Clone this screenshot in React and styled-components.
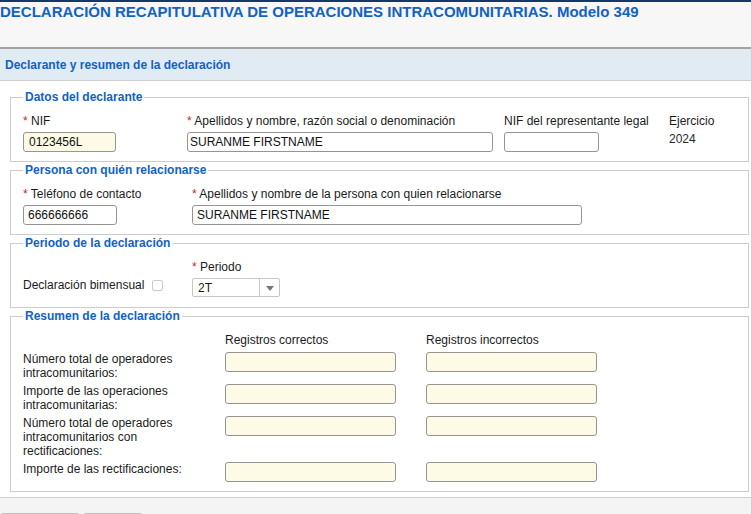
import React from 'react'
import styled, { createGlobalStyle } from 'styled-components'

const GlobalStyle = createGlobalStyle`
  html, body {
    margin: 0;
    padding: 0;
    background: #fff;
    overflow: hidden;
  }
  body {
    font-family: "Liberation Sans", Arial, Helvetica, sans-serif;
    font-size: 12px;
    color: #1b1b1b;
  }
`

const BLUE = '#1162c3'

const Page = styled.div`
  width: 751px;
  height: 514px;
  overflow: hidden;
  border-right: 1px solid #cfcfcf;
`

const TitleBar = styled.header`
  height: 44px;
  padding: 1px 0 0 0;
  background: #f7f7f7;
  border-top: 2px solid #15386a;
  border-bottom: 2px solid #a2a2a2;
`

const Title = styled.h1`
  margin: 0;
  font-size: 15px;
  line-height: 17px;
  font-weight: bold;
  color: ${BLUE};
`

const PanelHeader = styled.div`
  height: 31px;
  display: flex;
  align-items: center;
  padding-left: 5px;
  background: #e0ebf4;
  border-bottom: 1px solid #cfcfcf;
  font-weight: bold;
  font-size: 12px;
  color: ${BLUE};
`

const Body = styled.div`
  padding: 9px 2px 4px 10px;
`

const Group = styled.fieldset`
  margin: 0 0 1px;
  padding: 7px 0 9px 12px;
  border: 1px solid #cdcdcd;
  min-width: 0;
`

const Legend = styled.legend`
  padding: 0 2px;
  font-size: 12px;
  line-height: 14px;
  font-weight: bold;
  color: ${BLUE};
`

const GroupBody = styled.div`
  height: ${p => p.$h}px;
  overflow: hidden;
`

const Row = styled.div`
  display: flex;
  align-items: flex-start;
`

const Field = styled.div`
  width: ${p => p.$w ? `${p.$w}px` : 'auto'};
  flex: ${p => p.$w ? 'none' : '1'};
  display: flex;
  flex-direction: column;
`

const Label = styled.label`
  display: block;
  padding-top: 3px;
  margin-bottom: 4px;
  line-height: 14px;
  font-size: 12px;
  white-space: nowrap;
`

const Req = styled.span`
  color: #d0242a;
`

const Value = styled.span`
  line-height: 14px;
  color: #2a2a2a;
`

const Input = styled.input`
  width: ${p => p.$w}px;
  height: 20px;
  box-sizing: border-box;
  margin: 0;
  padding: 0 ${p => p.$pad ?? 3}px;
  border: 1px solid #959595;
  border-radius: 3px;
  background: ${p => p.$cream ? '#fdfbe6' : '#fff'};
  font-family: inherit;
  font-size: 12px;
  color: #111;
  outline: none;
`

const CheckLine = styled.div`
  width: 169px;
  margin-top: 21px;
  display: flex;
  align-items: center;
  gap: 8px;
`

const Box = styled.span`
  width: 9px;
  height: 9px;
  border: 1px solid #cbcbcb;
  border-radius: 2px;
  background: #fff;
`

const Select = styled.div`
  width: 88px;
  height: 19px;
  box-sizing: border-box;
  display: flex;
  border: 1px solid #c6c6c6;
  border-radius: 2px;
  background: #fff;
`

const SelectValue = styled.span`
  flex: 1;
  padding-left: 5px;
  line-height: 19px;
`

const SelectArrow = styled.span`
  width: 19px;
  border-left: 1px solid #c6c6c6;
  display: flex;
  align-items: center;
  justify-content: center;
  padding-top: 2px;
`

const SummaryGrid = styled.div`
  display: grid;
  grid-template-columns: 202px 201px 171px;
  row-gap: 4px;
  align-items: start;
`

const ColHead = styled.span`
  padding-top: 3px;
  margin-bottom: 1px;
  line-height: 14px;
`

const RowLabel = styled.span`
  width: 178px;
  line-height: 14px;
`

const Footer = styled.div`
  height: 40px;
  padding-top: 15px;
  background: #f4f4f4;
  border-top: 1px solid #cfcfcf;
  display: flex;
  gap: 3px;
`

const Button = styled.button`
  width: ${p => p.$w}px;
  height: 24px;
  border: 1px solid #bdbdbd;
  border-radius: 3px;
  background: #fbfbfb;
`

const summaryRows = [
  'Número total de operadores intracomunitarios:',
  'Importe de las operaciones intracomunitarias:',
  'Número total de operadores intracomunitarios con rectificaciones:',
  'Importe de las rectificaciones:',
]

const ReqLabel = ({ children }) => (
  <Label><Req>*</Req> {children}</Label>
)

export default function App() {
  return (
    <Page>
      <GlobalStyle />
      <TitleBar>
        <Title>DECLARACIÓN RECAPITULATIVA DE OPERACIONES INTRACOMUNITARIAS. Modelo 349</Title>
      </TitleBar>
      <PanelHeader>Declarante y resumen de la declaración</PanelHeader>

      <Body>
        <Group>
          <Legend>Datos del declarante</Legend>
          <GroupBody $h={41}>
            <Row>
              <Field $w={164}>
                <ReqLabel>NIF</ReqLabel>
                <Input $w={93} $pad={5} $cream defaultValue="0123456L" readOnly />
              </Field>
              <Field $w={317}>
                <ReqLabel>Apellidos y nombre, razón social o denominación</ReqLabel>
                <Input $w={306} $pad={2} defaultValue="SURANME FIRSTNAME" readOnly />
              </Field>
              <Field $w={165}>
                <Label>NIF del representante legal</Label>
                <Input $w={95} readOnly />
              </Field>
              <Field>
                <Label>Ejercicio</Label>
                <Value>2024</Value>
              </Field>
            </Row>
          </GroupBody>
        </Group>

        <Group>
          <Legend>Persona con quién relacionarse</Legend>
          <GroupBody $h={41}>
            <Row>
              <Field $w={169}>
                <ReqLabel>Teléfono de contacto</ReqLabel>
                <Input $w={94} $pad={4} defaultValue="666666666" readOnly />
              </Field>
              <Field>
                <ReqLabel>Apellidos y nombre de la persona con quien relacionarse</ReqLabel>
                <Input $w={390} $pad={4} defaultValue="SURANME FIRSTNAME" readOnly />
              </Field>
            </Row>
          </GroupBody>
        </Group>

        <Group>
          <Legend>Periodo de la declaración</Legend>
          <GroupBody $h={41}>
            <Row>
              <CheckLine>
                <span>Declaración bimensual</span>
                <Box />
              </CheckLine>
              <Field $w={120}>
                <ReqLabel>Periodo</ReqLabel>
                <Select>
                  <SelectValue>2T</SelectValue>
                  <SelectArrow>
                    <svg width="8" height="5" viewBox="0 0 8 5">
                      <path d="M0 0h8L4 5z" fill="#777" />
                    </svg>
                  </SelectArrow>
                </Select>
              </Field>
            </Row>
          </GroupBody>
        </Group>

        <Group>
          <Legend>Resumen de la declaración</Legend>
          <GroupBody $h={152}>
            <SummaryGrid>
              <span />
              <ColHead>Registros correctos</ColHead>
              <ColHead>Registros incorrectos</ColHead>
              {summaryRows.map(text => (
                <React.Fragment key={text}>
                  <RowLabel>{text}</RowLabel>
                  <Input $w={171} $cream readOnly />
                  <Input $w={171} $cream readOnly />
                </React.Fragment>
              ))}
            </SummaryGrid>
          </GroupBody>
        </Group>
      </Body>

      <Footer>
        <Button $w={80} />
        <Button $w={60} />
      </Footer>
    </Page>
  )
}
